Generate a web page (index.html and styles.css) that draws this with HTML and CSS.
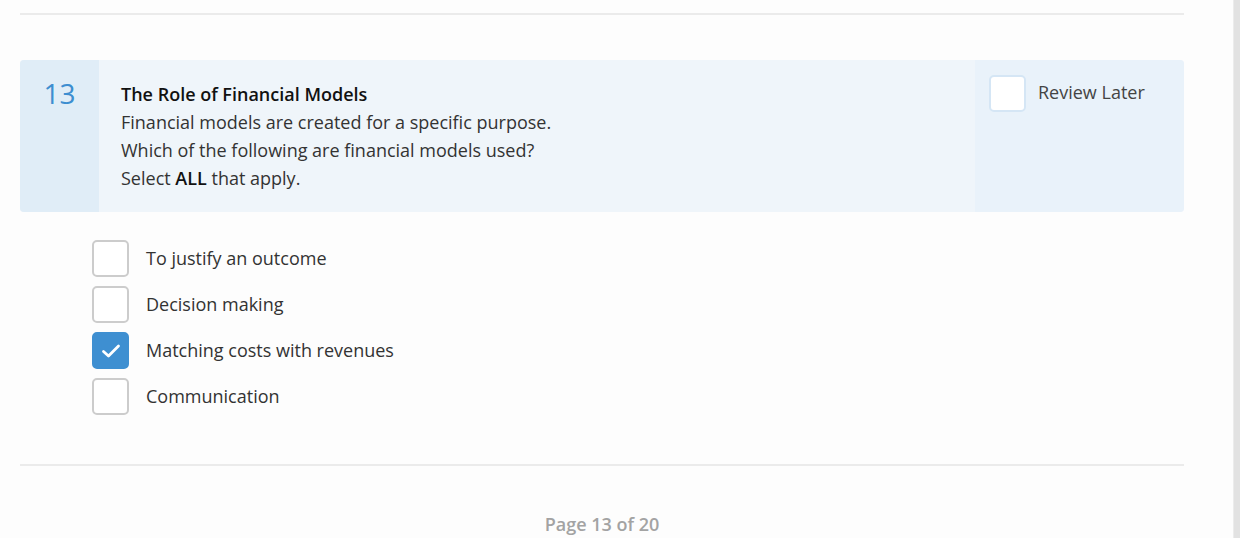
FILE: index.html
```html
<!DOCTYPE html>
<html>
<head>
<meta charset="utf-8">
<link rel="stylesheet" href="styles.css">
</head>
<body>
<div class="page">
  <main class="content">
    <hr class="rule top-rule">
    <section class="question">
      <div class="qnum">13</div>
      <div class="qbody">
        <div class="qtitle">The Role of Financial Models</div>
        <div class="qline">Financial models are created for a specific purpose.</div>
        <div class="qline">Which of the following are financial models used?</div>
        <div class="qline">Select <b>ALL</b> that apply.</div>
      </div>
      <div class="qside">
        <label class="review">
          <span class="review-box"></span>
          <span class="review-text">Review Later</span>
        </label>
      </div>
    </section>
    <ul class="options">
      <li class="option"><span class="box"></span><span class="opt-text">To justify an outcome</span></li>
      <li class="option"><span class="box"></span><span class="opt-text">Decision making</span></li>
      <li class="option"><span class="box checked"><svg width="22" height="18" viewBox="0 0 22 18"><polyline points="3.5,9.5 8.5,14 18.5,4" fill="none" stroke="#fff" stroke-width="2.8" stroke-linecap="round" stroke-linejoin="round"/></svg></span><span class="opt-text">Matching costs with revenues</span></li>
      <li class="option"><span class="box"></span><span class="opt-text">Communication</span></li>
    </ul>
    <hr class="rule bottom-rule">
    <div class="pager">Page 13 of 20</div>
  </main>
  <div class="scroll-track"></div>
</div>
</body>
</html>
```

FILE: styles.css
```css
html, body {
  margin: 0;
  padding: 0;
  height: 100%;
  overflow: hidden;
}
body {
  background: #fdfdfd;
  font-family: "Open Sans", "Liberation Sans", sans-serif;
  color: #333;
}
.page {
  display: flex;
  height: 538px;
}
.content {
  width: 1164px;
  padding-left: 20px;
  flex: none;
}
.scroll-track {
  margin-left: auto;
  width: 6px;
  background: #e2e2e2;
  border-left: 1px solid #ececec;
}
.rule {
  border: 0;
  height: 2px;
  background: #ebebeb;
  margin: 0;
}
.top-rule {
  margin-top: 13px;
}
.question {
  margin-top: 45px;
  display: flex;
  background: #eff5fa;
  border-radius: 4px;
  overflow: hidden;
  height: 152px;
}
.qnum {
  width: 79px;
  flex: none;
  background: #e0edf7;
  color: #3d8ed0;
  font-size: 28px;
  line-height: 28px;
  text-align: center;
  padding-top: 19px;
  box-sizing: border-box;
}
.qbody {
  flex: 1;
  padding: 20px 0 20px 22px;
  font-size: 18px;
  line-height: 28px;
  color: #333;
}
.qtitle {
  font-weight: 600;
  color: #111;
}
.qline b {
  font-weight: 600;
  color: #111;
}
.qside {
  width: 209px;
  flex: none;
  background: #e9f2fa;
  padding: 15px 0 0 14px;
  box-sizing: border-box;
}
.review {
  display: flex;
  align-items: center;
}
.review-box {
  width: 37px;
  height: 37px;
  box-sizing: border-box;
  border: 2px solid #d5e6f5;
  border-radius: 5px;
  background: #fff;
}
.review-text {
  margin-left: 12px;
  font-size: 18px;
  color: #444;
  margin-top: -3px;
}
.options {
  list-style: none;
  margin: 28px 0 0 72px;
  padding: 0;
  display: flex;
  flex-direction: column;
  gap: 9px;
}
.option {
  display: flex;
  align-items: center;
  height: 37px;
}
.box {
  width: 37px;
  height: 37px;
  box-sizing: border-box;
  border: 2px solid #cccccc;
  border-radius: 5px;
  background: #fff;
  display: flex;
  align-items: center;
  justify-content: center;
}
.box.checked {
  background: #3e8fd1;
  border-color: #3e8fd1;
}
.opt-text {
  margin-left: 17px;
  font-size: 18px;
  color: #333;
  margin-top: -1px;
}
.bottom-rule {
  margin-top: 49px;
}
.pager {
  text-align: center;
  margin-top: 46px;
  font-size: 18px;
  font-weight: 600;
  color: #a3a3a3;
}
```
